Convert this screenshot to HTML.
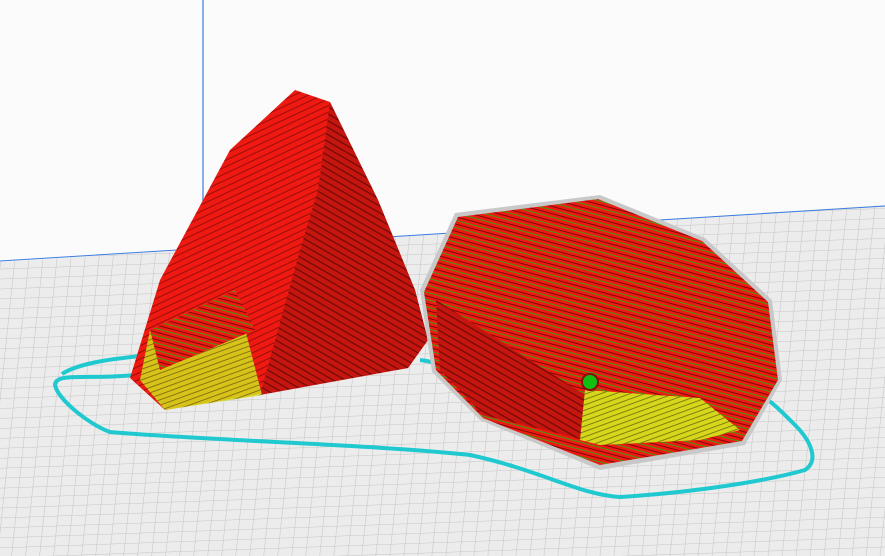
<!DOCTYPE html>
<html><head><meta charset="utf-8"><style>html,body{margin:0;padding:0;background:#fff;overflow:hidden}svg{display:block}</style></head>
<body>
<svg width="885" height="556" viewBox="0 0 885 556" xmlns="http://www.w3.org/2000/svg">
<defs>
<pattern id="grid" width="14" height="10" patternUnits="userSpaceOnUse" patternTransform="skewX(-8) rotate(-2)">
<rect width="14" height="10" fill="#ececec"/>
<path d="M0 0H14M0 0V10" stroke="#c4c4c4" stroke-width="1"/>
</pattern>
<pattern id="stripes" width="6" height="6" patternUnits="userSpaceOnUse" patternTransform="rotate(-25)">
<rect width="6" height="6" fill="#ee1a12"/>
<rect width="6" height="1" fill="#9a0d0a"/>
</pattern>
<pattern id="stripes2" width="6" height="6" patternUnits="userSpaceOnUse" patternTransform="rotate(30)">
<rect width="6" height="6" fill="#c4150f"/>
<rect width="6" height="1.2" fill="#700907"/>
</pattern>
<pattern id="bowl" width="7" height="7" patternUnits="userSpaceOnUse" patternTransform="rotate(15)">
<rect width="7" height="7" fill="#ee1a12"/>
<rect width="7" height="1" fill="#7a0a08"/>
<rect y="3.5" width="7" height="0.8" fill="#10c010"/>
</pattern>
<pattern id="yel" width="5" height="5" patternUnits="userSpaceOnUse" patternTransform="rotate(-20)">
<rect width="5" height="5" fill="#d6d61a"/>
<rect width="5" height="0.8" fill="#6a6a10"/>
</pattern>
</defs>
<rect width="885" height="556" fill="#fbfbfb"/>
<polygon points="0,262 885,205 885,556 0,556" fill="url(#grid)"/>
<line x1="0" y1="261" x2="885" y2="206" stroke="#3a7be0" stroke-width="1"/>
<line x1="203" y1="0" x2="203" y2="250" stroke="#3a7be0" stroke-width="1.2"/>
<path d="M62,374 C80,362 120,358 150,355 M420,360 C440,362 445,370 445,380 M135,375 C90,380 55,372 55,385 C58,400 90,425 110,432 C200,440 380,445 470,455 C540,470 580,495 620,497 C700,492 770,480 805,470 C820,460 810,440 795,425 C780,410 770,400 760,395" fill="none" stroke="#1fc9cf" stroke-width="4"/>
<polygon points="295,90 330,102 378,200 415,290 428,340 408,368 165,410 130,378 160,280 230,150" fill="url(#stripes)"/>
<polygon points="330,102 378,200 415,290 428,340 408,368 260,395 300,250 318,190" fill="url(#stripes2)"/>
<polygon points="150,330 235,290 262,395 165,410 140,380" fill="url(#yel)" opacity="0.9"/>
<polygon points="150,330 235,290 255,330 160,370" fill="url(#bowl)"/>
<polygon points="455,213 600,195 705,238 772,300 782,380 745,445 600,470 480,420 432,372 420,290" fill="#c8c8c8"/>
<polygon points="458,217 598,199 702,241 768,302 778,380 742,441 600,465 483,418 436,370 424,292" fill="url(#bowl)"/>
<polygon points="436,300 585,395 585,440 483,415 440,370" fill="url(#stripes2)"/>
<polygon points="585,390 700,398 740,430 700,440 600,445 580,440" fill="url(#yel)"/>
<circle cx="590" cy="382" r="8" fill="#10c010" stroke="#8a0c0a" stroke-width="2"/>
</svg>
</body></html>
